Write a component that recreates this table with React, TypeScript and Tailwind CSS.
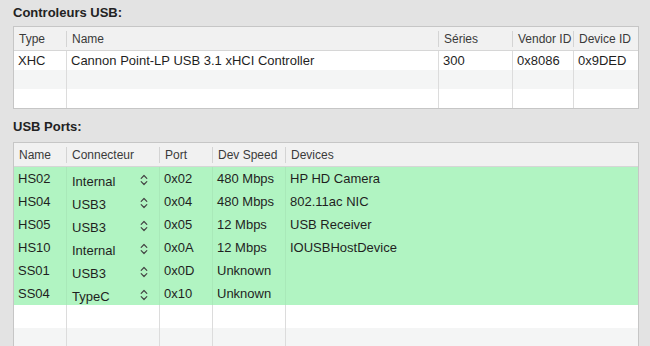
import React from "react";

type Col = { label: string; w: string };

const ctrlCols: Col[] = [
  { label: "Type", w: "w-[52px]" },
  { label: "Name", w: "w-[372px]" },
  { label: "Séries", w: "w-[74px]" },
  { label: "Vendor ID", w: "w-[61px]" },
  { label: "Device ID", w: "flex-1" },
];

const portCols: Col[] = [
  { label: "Name", w: "w-[52px]" },
  { label: "Connecteur", w: "w-[93px]" },
  { label: "Port", w: "w-[53px]" },
  { label: "Dev Speed", w: "w-[73px]" },
  { label: "Devices", w: "flex-1" },
];

const ports = [
  ["HS02", "Internal", "0x02", "480 Mbps", "HP HD Camera"],
  ["HS04", "USB3", "0x04", "480 Mbps", "802.11ac NIC"],
  ["HS05", "USB3", "0x05", "12 Mbps", "USB Receiver"],
  ["HS10", "Internal", "0x0A", "12 Mbps", "IOUSBHostDevice"],
  ["SS01", "USB3", "0x0D", "Unknown", ""],
  ["SS04", "TypeC", "0x10", "Unknown", ""],
];

function Header({ cols }: { cols: Col[] }) {
  return (
    <div className="flex h-[24px] bg-[#f1f1f1] border-b border-[#d6d6d6] text-[#3a3a3a] text-[12px] whitespace-nowrap">
      {cols.map((c, i) => (
        <div key={c.label} className={`${c.w} relative flex items-center pl-[5px] overflow-hidden`}>
          {i > 0 && (
            <span className="absolute left-0 top-[4px] h-[16px] w-px bg-[#d4d4d4]" />
          )}
          <span className={i > 0 ? "pl-[1px]" : ""}>{c.label}</span>
        </div>
      ))}
    </div>
  );
}

function Chevrons() {
  return (
    <svg width="8" height="12" viewBox="0 0 8 12" className="text-[#444]">
      <path d="M1.2 4.3 L4 1.5 L6.8 4.3" fill="none" stroke="currentColor" strokeWidth="1.2" strokeLinecap="round" strokeLinejoin="round" />
      <path d="M1.2 7.7 L4 10.5 L6.8 7.7" fill="none" stroke="currentColor" strokeWidth="1.2" strokeLinecap="round" strokeLinejoin="round" />
    </svg>
  );
}

function EmptyRow({ cols, h, bg, line }: { cols: Col[]; h: string; bg: string; line: string }) {
  return (
    <div className={`flex ${h} ${bg}`}>
      {cols.map((c, i) => (
        <div key={c.label} className={`${c.w} ${i > 0 ? `border-l ${line}` : ""}`} />
      ))}
    </div>
  );
}

export default function App() {
  return (
    <div
      className="w-[650px] h-[346px] overflow-hidden bg-[#e3e3e3] text-[13px] text-[#1f1f1f] flex"
      style={{ fontFamily: '"Liberation Sans", Arial, sans-serif' }}
    >
      <div className="w-[639px] pl-[13px] pt-[4px]">
        <div className="font-bold h-[17px] leading-[17px] mb-[5px] text-[#222]">Controleurs USB:</div>
        <div className="border border-[#c6c6c6] bg-white w-[626px]">
          <Header cols={ctrlCols} />
          <div className="flex h-[19px] bg-white items-center whitespace-nowrap">
            {["XHC", "Cannon Point-LP USB 3.1 xHCI Controller", "300", "0x8086", "0x9DED"].map((t, i) => (
              <div
                key={i}
                className={`${ctrlCols[i].w} h-full flex items-center pl-[4px] ${i > 0 ? "border-l border-[#dcdcdc]" : ""}`}
              >
                {t}
              </div>
            ))}
          </div>
          <EmptyRow cols={ctrlCols} h="h-[19px]" bg="bg-[#f4f5f5]" line="border-[#dcdcdc]" />
          <EmptyRow cols={ctrlCols} h="h-[19px]" bg="bg-white" line="border-[#dcdcdc]" />
        </div>

        <div className="font-bold h-[17px] leading-[17px] mt-[9px] mb-[7px] text-[#222]">USB Ports:</div>
        <div className="border border-[#c6c6c6] border-b-0 bg-white w-[626px]">
          <Header cols={portCols} />
          <div className="bg-[#b1f4c2] whitespace-nowrap">
            {ports.map((r) => (
              <div key={r[0]} className="flex h-[23px]">
                <div className={`${portCols[0].w} flex items-center pl-[4px]`}>{r[0]}</div>
                <div className={`${portCols[1].w} flex items-center justify-between pl-[5px] pr-[11px] pt-[6px] border-l border-[#a9e9b9]`}>
                  <span>{r[1]}</span>
                  <span className="-mt-[3px]"><Chevrons /></span>
                </div>
                <div className={`${portCols[2].w} flex items-center pl-[4px] border-l border-[#a9e9b9]`}>{r[2]}</div>
                <div className={`${portCols[3].w} flex items-center pl-[4px] border-l border-[#a9e9b9]`}>{r[3]}</div>
                <div className={`${portCols[4].w} flex items-center pl-[4px] border-l border-[#a9e9b9]`}>{r[4]}</div>
              </div>
            ))}
          </div>
          <EmptyRow cols={portCols} h="h-[23px]" bg="bg-white" line="border-[#dcdcdc]" />
          <EmptyRow cols={portCols} h="h-[23px]" bg="bg-[#f4f5f5]" line="border-[#dcdcdc]" />
        </div>
      </div>
      <div className="flex-1" />
    </div>
  );
}
